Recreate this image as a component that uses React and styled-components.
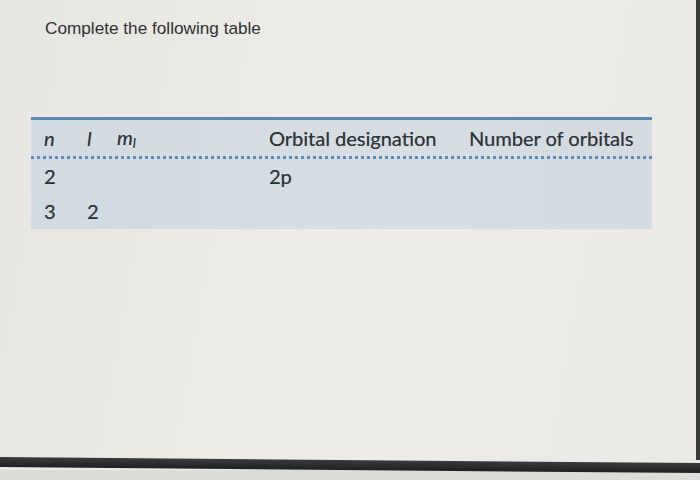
import React from "react";
import styled, { createGlobalStyle } from "styled-components";

const GlobalStyle = createGlobalStyle`
  html, body {
    margin: 0;
    padding: 0;
    background: #e9e7e2;
  }
`;

const Screen = styled.div`
  width: 700px;
  height: 480px;
  display: flex;
  flex-direction: column;
  background: linear-gradient(100deg, #e6e5e0 0%, #eeece7 45%, #ebe9e3 100%);
  overflow: hidden;
`;

const Content = styled.div`
  flex: 1;
  display: flex;
  flex-direction: column;
  padding: 18px 0 0 31px;
  border-right: 4px solid #3a3a3a;
`;

const Prompt = styled.h2`
  margin: 0 0 0 14px;
  font-family: "Liberation Sans", Arial, sans-serif;
  font-weight: normal;
  font-size: 17.2px;
  color: #2f3133;
`;

const Table = styled.div`
  margin-top: 78px;
  width: 621px;
  background: linear-gradient(90deg, #d2dbe1 0%, #d6dee3 60%, #d3dbe0 100%);
  border-top: 3px solid #5b87b6;
  font-family: Lato, "Open Sans", sans-serif;
  color: #2e3338;
`;

const Row = styled.div`
  display: grid;
  grid-template-columns: 43px 30px 152px 200px 1fr;
  padding-left: 13px;
  align-items: center;
  height: ${(p) => p.$h}px;
  border-bottom: ${(p) => (p.$dotted ? "3px dotted #5b8cc0" : "none")};
`;

const Cell = styled.span`
  font-size: 20px;
  font-style: ${(p) => (p.$italic ? "italic" : "normal")};
  white-space: nowrap;
  text-shadow: 0.2px 0 0 rgba(46, 51, 56, 0.6);
`;

const Sub = styled.sub`
  font-size: 13px;
  font-style: italic;
  vertical-align: -3px;
`;

const BottomBar = styled.div`
  height: 10px;
  background: linear-gradient(180deg, #3a3b3c 0%, #1f2021 100%);
  transform: skewY(0.5deg);
`;

const BottomStrip = styled.div`
  height: 10px;
  background: #dcdcd8;
`;

export default function App() {
  return (
    <>
      <GlobalStyle />
      <Screen>
        <Content>
          <Prompt>Complete the following table</Prompt>
          <Table>
            <Row $h={36} $dotted>
              <Cell $italic>n</Cell>
              <Cell $italic>l</Cell>
              <Cell $italic>
                m<Sub>l</Sub>
              </Cell>
              <Cell>Orbital designation</Cell>
              <Cell>Number of orbitals</Cell>
            </Row>
            <Row $h={34}>
              <Cell>2</Cell>
              <Cell />
              <Cell />
              <Cell>2p</Cell>
              <Cell />
            </Row>
            <Row $h={36}>
              <Cell>3</Cell>
              <Cell>2</Cell>
              <Cell />
              <Cell />
              <Cell />
            </Row>
          </Table>
        </Content>
        <BottomBar />
        <BottomStrip />
      </Screen>
    </>
  );
}
